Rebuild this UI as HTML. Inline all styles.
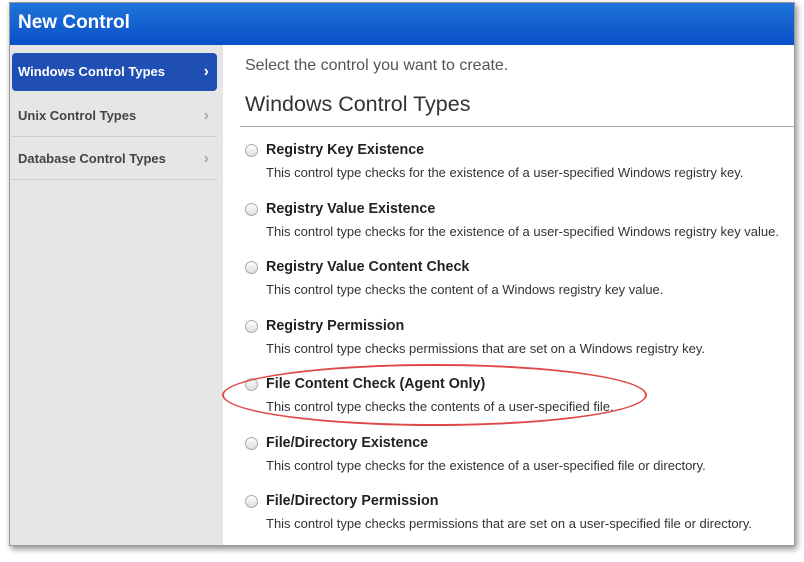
<!DOCTYPE html>
<html><head><style>
body{margin:0;width:804px;height:562px;background:#fff;position:relative;overflow:hidden;font-family:"Liberation Sans",Arial,sans-serif}
#panel{position:absolute;left:9px;top:2px;width:786px;height:544px;background:#fff;box-shadow:2px 3px 6px rgba(0,0,0,.45);border:1px solid #999;box-sizing:border-box;overflow:hidden}
#hdr{position:absolute;left:0;top:0;width:100%;height:42px;background:linear-gradient(#1f74d9,#0a4fc7);color:#fff;font-weight:bold;font-size:19px;line-height:40px;padding-left:8px;box-sizing:border-box}
#side{position:absolute;left:0;top:42px;width:213px;bottom:0;background:#e6e6e6}
.nav{position:absolute;left:2px;width:205px;height:42px;border-bottom:1px solid #ccc;font-size:13px;font-weight:bold;color:#444;line-height:42px;padding-left:6px;box-sizing:border-box}
.nav span{position:absolute;right:8px;top:0;color:#aaa;font-size:16px}
.nav.act{background:#1f4fb4;color:#fff;border-radius:4px;border:none;top:50px;height:38px;line-height:38px}
.nav.act span{color:#fff}
.t{position:absolute;left:266px;font-size:14.3px;font-weight:bold;color:#222}
.d{position:absolute;left:266px;font-size:13px;color:#333}
.r{position:absolute;left:245px;width:11px;height:11px;border-radius:50%;border:1px solid #aaa;background:linear-gradient(#fff,#ddd)}
</style></head><body>
<div id="panel">
<div id="hdr">New Control</div>
<div id="side">
<div class="nav act" style="top:8px">Windows Control Types<span>&#x203A;</span></div>
<div class="nav" style="top:50px">Unix Control Types<span>&#x203A;</span></div>
<div class="nav" style="top:93px">Database Control Types<span>&#x203A;</span></div>
</div>
</div>
<div style="position:absolute;left:245px;top:57px;font-size:16px;color:#555">Select the control you want to create.</div>
<div style="position:absolute;left:245px;top:92px;font-size:21.5px;color:#333">Windows Control Types</div>
<div style="position:absolute;left:240px;top:126px;width:555px;height:1px;background:#aaa"></div>

<div class="r" style="top:144px"></div><div class="t" style="top:142px">Registry Key Existence</div><div class="d" style="top:165px">This control type checks for the existence of a user-specified Windows registry key.</div>
<div class="r" style="top:203px"></div><div class="t" style="top:201px">Registry Value Existence</div><div class="d" style="top:224px">This control type checks for the existence of a user-specified Windows registry key value.</div>
<div class="r" style="top:261px"></div><div class="t" style="top:259px">Registry Value Content Check</div><div class="d" style="top:282px">This control type checks the content of a Windows registry key value.</div>
<div class="r" style="top:320px"></div><div class="t" style="top:318px">Registry Permission</div><div class="d" style="top:341px">This control type checks permissions that are set on a Windows registry key.</div>
<div class="r" style="top:378px"></div><div class="t" style="top:376px">File Content Check (Agent Only)</div><div class="d" style="top:399px">This control type checks the contents of a user-specified file.</div>
<div class="r" style="top:437px"></div><div class="t" style="top:435px">File/Directory Existence</div><div class="d" style="top:458px">This control type checks for the existence of a user-specified file or directory.</div>
<div class="r" style="top:495px"></div><div class="t" style="top:493px">File/Directory Permission</div><div class="d" style="top:516px">This control type checks permissions that are set on a user-specified file or directory.</div>
<div style="position:absolute;left:222px;top:364px;width:421px;height:58px;border:2px solid #e04848;border-radius:50%"></div>
</body></html>
